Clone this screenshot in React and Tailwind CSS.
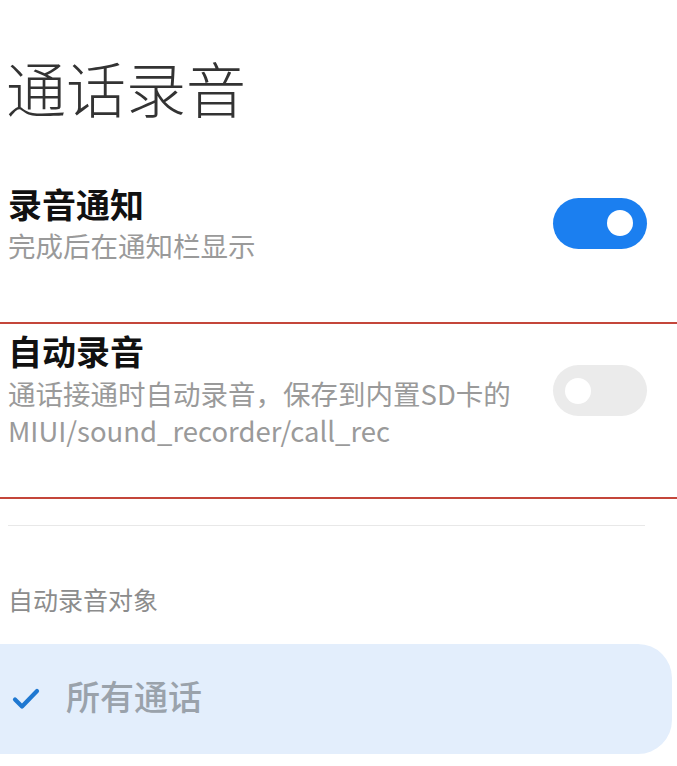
import { useState } from 'react';

const FONT = { fontFamily: '"Noto Sans CJK SC", "Noto Sans", sans-serif' };

function Toggle({ on, onClick }) {
  return (
    <button
      onClick={onClick}
      className={`relative w-[94px] h-[51px] rounded-full shrink-0 ${on ? 'bg-[#1b7ff0]' : 'bg-[#ebebeb]'}`}
    >
      <span
        className={`absolute top-1/2 -translate-y-1/2 w-[26px] h-[26px] rounded-full bg-white ${on ? 'left-[54px]' : 'left-[12px]'}`}
      />
    </button>
  );
}

export default function App() {
  const [notify, setNotify] = useState(true);
  const [auto, setAuto] = useState(false);

  return (
    <div className="w-[677px] h-[766px] bg-white overflow-hidden" style={FONT}>
      {/* Title */}
      <h1 className="pt-[49px] pl-[6px] text-[60px] leading-[76px] font-light text-[#333333]">通话录音</h1>

      {/* 录音通知 */}
      <div className="mt-[59px] flex items-center justify-between pl-[8px] pr-[30px]">
        <div>
          <div className="text-[34px] leading-[40px] font-bold text-[#111111]">录音通知</div>
          <div className="mt-[4px] text-[27.5px] leading-[34px] text-[#9a9a9a]">完成后在通知栏显示</div>
        </div>
        <Toggle on={notify} onClick={() => setNotify(!notify)} />
      </div>

      {/* 自动录音 */}
      <div className="mt-[60px] h-[177px] border-y-2 border-[#c4463a] flex justify-between pl-[8px] pr-[30px]">
        <div className="pt-[7px]">
          <div className="text-[34px] leading-[40px] font-bold text-[#111111]">自动录音</div>
          <div className="mt-[4px] text-[27.5px] leading-[37px] text-[#9a9a9a]">
            通话接通时自动录音，保存到内置SD卡的
            <br />
            MIUI/sound_recorder/call_rec
          </div>
        </div>
        <div className="pt-[41px]">
          <Toggle on={auto} onClick={() => setAuto(!auto)} />
        </div>
      </div>

      {/* Divider */}
      <div className="mt-[26px] ml-[8px] w-[637px] h-px bg-[#e8e8e8]" />

      <div className="mt-[58px] pl-[8px] text-[25px] leading-[30px] text-[#8c8c8c]">自动录音对象</div>

      {/* Option */}
      <div className="mt-[30px] w-[672px] h-[110px] bg-[#e3eefc] rounded-r-[34px] flex items-center gap-[26px] pl-[12px]">
        <svg width="28" height="24" viewBox="0 0 28 24" fill="none">
          <path d="M3 12.5 L10 19.5 L25 4" stroke="#1f78d1" strokeWidth="4.2" strokeLinecap="round" strokeLinejoin="round" />
        </svg>
        <span className="-mt-[6px] text-[34px] leading-[40px] font-medium text-[#9aa2ab]">所有通话</span>
      </div>
    </div>
  );
}
